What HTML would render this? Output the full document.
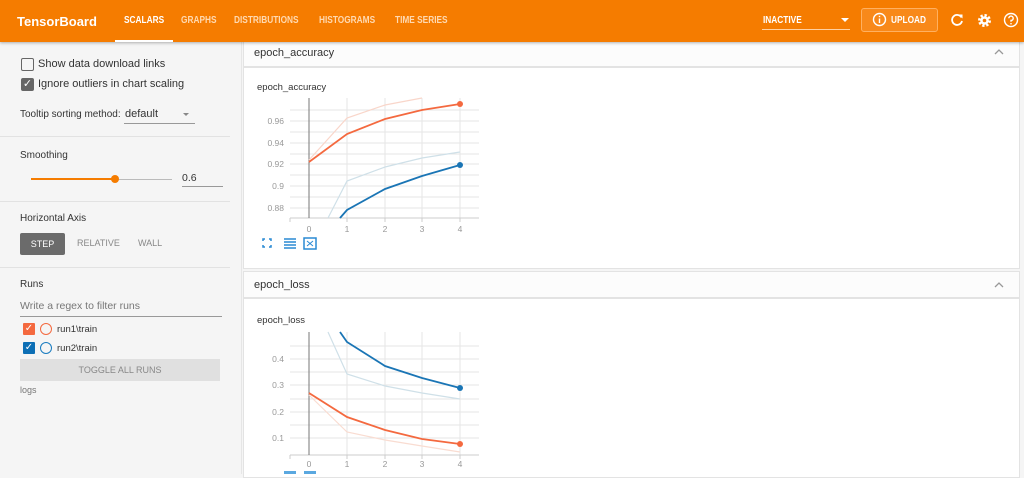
<!DOCTYPE html>
<html><head><meta charset="utf-8"><style>
*{box-sizing:border-box;margin:0;padding:0}
body{width:1024px;height:474px;overflow:hidden;background:#f5f5f5;font-family:"Liberation Sans",sans-serif;color:#212121;position:relative}
.hdr{position:absolute;left:0;top:0;width:1024px;height:42px;background:#f57c00;box-shadow:0 1px 3px rgba(0,0,0,.3);z-index:2}
.hdr .t{position:absolute;color:#fff;font-size:13px;font-weight:bold;top:14px}
.hdr .n{position:absolute;color:#ffd9b0;font-size:10px;top:15px;font-weight:bold;transform:scaleX(0.83);transform-origin:0 0;white-space:nowrap}
.a{position:absolute}
.side{position:absolute;left:0;top:42px;width:242px;height:432px;background:#f5f5f5;border-right:1px solid #e6e6e6}
.s{position:absolute;font-size:11px;color:#333}
.hr{position:absolute;left:0;width:230px;height:1px;background:#e2e2e2}
.card{position:absolute;left:243px;width:777px;background:#fff;border:1px solid #e3e3e3}
.ch{position:absolute;left:243px;width:777px;height:27px;background:#fcfcfc;border:1px solid #e3e3e3;font-size:11px;color:#333;padding:7px 0 0 10px}
</style></head><body>
<div class="hdr">
<div class="t" style="left:17px">TensorBoard</div>
<div class="n" style="left:124px;color:#fff">SCALARS</div>
<div class="a" style="left:115px;top:40px;width:58px;height:2px;background:#fff"></div>
<div class="n" style="left:181px">GRAPHS</div>
<div class="n" style="left:234px">DISTRIBUTIONS</div>
<div class="n" style="left:319px">HISTOGRAMS</div>
<div class="n" style="left:395px">TIME SERIES</div>
<div class="n" style="left:763px;color:#fff">INACTIVE</div>
<div class="a" style="left:762px;top:29px;width:88px;height:1px;background:#ffd0a0"></div>
<div class="a" style="left:841px;top:18px;border:4px solid transparent;border-top:4px solid #fff"></div>
<div class="a" style="left:861px;top:8px;width:77px;height:24px;border:1px solid #ffb060;border-radius:3px;background:#f8891a"></div>
<svg class="a" style="left:872px;top:12px" width="15" height="15"><circle cx="7.5" cy="7.5" r="6" fill="none" stroke="#fff" stroke-width="1.4"/><rect x="6.8" y="6.5" width="1.4" height="4.5" fill="#fff"/><rect x="6.8" y="3.8" width="1.4" height="1.4" fill="#fff"/></svg>
<div class="n" style="left:891px;color:#fff">UPLOAD</div>
<svg class="a" style="left:950px;top:13px" width="14" height="14"><path d="M11.5 4.5A5 5 0 1 0 12 8" fill="none" stroke="#fff" stroke-width="1.8"/><path d="M8.5 1.5L12.5 1.5L12.5 5.5Z" fill="#fff"/></svg>
<svg class="a" style="left:977px;top:13px" width="15" height="15"><circle cx="7.5" cy="7.5" r="5" fill="none" stroke="#fff" stroke-width="3" stroke-dasharray="2.2 1.7"/><circle cx="7.5" cy="7.5" r="4.3" fill="#fff"/><circle cx="7.5" cy="7.5" r="1.8" fill="#f57c00"/></svg>
<svg class="a" style="left:1003px;top:12px" width="16" height="16"><circle cx="8" cy="8" r="6.5" fill="none" stroke="#fff" stroke-width="1.4"/><path d="M5.8 6.3A2.2 2.2 0 1 1 8 8.5V9.8" fill="none" stroke="#fff" stroke-width="1.4"/><rect x="7.3" y="11" width="1.4" height="1.4" fill="#fff"/></svg>
</div>

<div class="side">
<div class="a" style="left:21px;top:16px;width:13px;height:13px;border:1.5px solid #666;border-radius:2px"></div>
<div class="s" style="left:38px;top:16px">Show data download links</div>
<div class="a" style="left:21px;top:36px;width:13px;height:13px;background:#666;border-radius:2px;color:#fff;font-size:11px;line-height:13px;text-align:center">✓</div>
<div class="s" style="left:38px;top:36px">Ignore outliers in chart scaling</div>
<div class="s" style="left:20px;top:67px;font-size:10px">Tooltip sorting method:</div>
<div class="s" style="left:125px;top:66px">default</div>
<div class="a" style="left:183px;top:71px;border:3.5px solid transparent;border-top:3.5px solid #888"></div>
<div class="a" style="left:124px;top:81px;width:71px;height:1px;background:#999"></div>
<div class="hr" style="top:94px"></div>
<div class="s" style="left:20px;top:108px;font-size:10px">Smoothing</div>
<div class="a" style="left:31px;top:136px;width:84px;height:2px;background:#f57c00"></div>
<div class="a" style="left:115px;top:137px;width:57px;height:1px;background:#bbb"></div>
<div class="a" style="left:111px;top:133px;width:8px;height:8px;border-radius:50%;background:#f57c00"></div>
<div class="s" style="left:182px;top:130px;font-size:10.5px">0.6</div>
<div class="a" style="left:182px;top:144px;width:41px;height:1px;background:#999"></div>
<div class="hr" style="top:159px"></div>
<div class="s" style="left:20px;top:171px;font-size:10px">Horizontal Axis</div>
<div class="a" style="left:20px;top:191px;width:45px;height:22px;background:#6b6b6b;border-radius:2px;color:#fff;font-size:9px;text-align:center;line-height:22px">STEP</div>
<div class="s" style="left:77px;top:196px;font-size:9px;color:#888">RELATIVE</div>
<div class="s" style="left:138px;top:196px;font-size:9px;color:#888">WALL</div>
<div class="hr" style="top:225px"></div>
<div class="s" style="left:20px;top:237px;font-size:10px">Runs</div>
<div class="s" style="left:20px;top:258px;font-size:10.5px;color:#777">Write a regex to filter runs</div>
<div class="a" style="left:20px;top:274px;width:202px;height:1px;background:#999"></div>
<div class="a" style="left:23px;top:281px;width:12px;height:12px;background:#f4693f;border-radius:1px;color:#fff;font-size:10px;line-height:12px;text-align:center">✓</div>
<div class="a" style="left:40px;top:281px;width:12px;height:12px;border:1.5px solid #f4693f;border-radius:50%"></div>
<div class="s" style="left:57px;top:282px;font-size:9.5px">run1\train</div>
<div class="a" style="left:23px;top:300px;width:12px;height:12px;background:#0d6fb5;border-radius:1px;color:#fff;font-size:10px;line-height:12px;text-align:center">✓</div>
<div class="a" style="left:40px;top:300px;width:12px;height:12px;border:1.5px solid #1a7cc0;border-radius:50%"></div>
<div class="s" style="left:57px;top:301px;font-size:9.5px">run2\train</div>
<div class="a" style="left:20px;top:317px;width:200px;height:22px;background:#e0e0e0;color:#888;font-size:9px;text-align:center;line-height:22px">TOGGLE ALL RUNS</div>
<div class="s" style="left:20px;top:343px;font-size:9px;color:#777">logs</div>
</div>

<div class="ch" style="top:40px;padding-top:6px">epoch_accuracy</div>
<div class="card" style="top:67px;height:202px"></div>
<div class="ch" style="top:271px">epoch_loss</div>
<div class="card" style="top:298px;height:180px"></div>
<svg class="a" style="left:993px;top:48px" width="12" height="8"><path d="M2 6L6 2L10 6" fill="none" stroke="#999" stroke-width="1.3"/></svg>
<svg class="a" style="left:993px;top:281px" width="12" height="8"><path d="M2 6L6 2L10 6" fill="none" stroke="#999" stroke-width="1.3"/></svg>

<svg class="a" style="left:0;top:0" width="1024" height="474" font-family="Liberation Sans" font-size="8.5" fill="#999">
<text x="257" y="90" font-size="9.5" fill="#333">epoch_accuracy</text>
<g stroke="#e6e6e6" stroke-width="1">
<path d="M290 121H479M290 143H479M290 164H479M290 186H479M290 208H479M290 110H479M290 132H479M290 154H479M290 175H479M290 197H479M347 98V218M385 98V218M422 98V218M460 98V218"/>
<path d="M290 218H479M290 218V222M347 218V222M385 218V222M422 218V222M460 218V222" stroke="#ccc"/>
</g>
<path d="M309 98V218" stroke="#777" stroke-width="1"/>
<g text-anchor="end"><text x="284" y="124">0.96</text><text x="284" y="146">0.94</text><text x="284" y="167">0.92</text><text x="284" y="189">0.9</text><text x="284" y="211">0.88</text></g>
<g text-anchor="middle"><text x="309" y="232">0</text><text x="347" y="232">1</text><text x="385" y="232">2</text><text x="422" y="232">3</text><text x="460" y="232">4</text></g>
<path d="M309 160L347 118L385 105L422 98" fill="none" stroke="#f9d6ca" stroke-width="1.2"/>
<path d="M328 218L347 181L385 167L422 158L460 152" fill="none" stroke="#cfe0e8" stroke-width="1.2"/>
<path d="M309 162L347 134L385 119L422 110L460 104" fill="none" stroke="#f4693f" stroke-width="1.8"/>
<path d="M340 218L347 210L385 189L422 176L460 165" fill="none" stroke="#1a75b5" stroke-width="1.8"/>
<circle cx="460" cy="104" r="3" fill="#f4693f"/><circle cx="460" cy="165" r="3" fill="#1a75b5"/>
<g fill="none" stroke="#2a8ad4" stroke-width="1.5">
<path d="M263 241V239H265M269 239H271V241M271 245V247H269M265 247H263V245"/>
<path d="M284 239H296M284 242H296M284 245H296M284 248H296"/>
<rect x="304" y="238" width="12" height="11"/><path d="M307 241L313 246M313 241L307 246" stroke-width="1"/>
</g>

<text x="257" y="323" font-size="9.5" fill="#333">epoch_loss</text>
<g stroke="#e6e6e6" stroke-width="1">
<path d="M290 359H479M290 385H479M290 412H479M290 438H479M290 346H479M290 372H479M290 399H479M290 425H479M347 332V455M385 332V455M422 332V455M460 332V455"/>
<path d="M290 455H479M290 455V459M347 455V459M385 455V459M422 455V459M460 455V459" stroke="#ccc"/>
</g>
<path d="M309 332V455" stroke="#777" stroke-width="1"/>
<g text-anchor="end"><text x="284" y="362">0.4</text><text x="284" y="388">0.3</text><text x="284" y="415">0.2</text><text x="284" y="441">0.1</text></g>
<g text-anchor="middle"><text x="309" y="467">0</text><text x="347" y="467">1</text><text x="385" y="467">2</text><text x="422" y="467">3</text><text x="460" y="467">4</text></g>
<path d="M328 332L347 374L385 386L422 393L460 399" fill="none" stroke="#cfe0e8" stroke-width="1.2"/>
<path d="M309 395L347 432L385 440L422 446L460 452" fill="none" stroke="#f9dcd1" stroke-width="1.2"/>
<path d="M340 332L347 342L385 366L422 378L460 388" fill="none" stroke="#1a75b5" stroke-width="1.8"/>
<path d="M309 393L347 417L385 430L422 439L460 444" fill="none" stroke="#f4693f" stroke-width="1.8"/>
<circle cx="460" cy="388" r="3" fill="#1a75b5"/><circle cx="460" cy="444" r="3" fill="#f4693f"/>
<rect x="284" y="471" width="12" height="4" fill="#5aa8e0"/><rect x="304" y="471" width="12" height="4" fill="#5aa8e0"/>
</svg>
</body></html>
